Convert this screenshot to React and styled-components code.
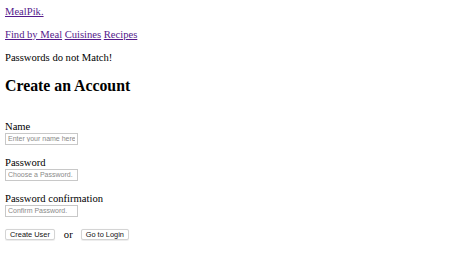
import React from 'react';
import styled, { createGlobalStyle } from 'styled-components';

const GlobalStyle = createGlobalStyle`
  body {
    margin: 5px;
    font-family: "Liberation Serif", "Times New Roman", serif;
    font-size: 10.6px;
    line-height: 1.15;
    color: #000;
    background: #fff;
  }
`;

const Header = styled.header`
  padding-top: 1px;
`;

const Link = styled.a`
  color: #551a8b;
  text-decoration: underline;
`;

const Nav = styled.p`
  margin: 10.6px 0;
  display: flex;
  gap: 2.6px;
`;

const Para = styled.p`
  margin: 10.6px 0;
`;

const Title = styled.h1`
  font-size: 15.8px;
  font-weight: bold;
  margin: 13px 0;
`;

const Form = styled.form`
  padding-top: 13px;
`;

const Field = styled.div`
  margin: 0 0 12px;
  display: flex;
  flex-direction: column;
  align-items: flex-start;
`;

const Label = styled.label`
  line-height: 12px;
`;

const Input = styled.input`
  font-family: "Liberation Sans", Arial, sans-serif;
  font-size: 7px;
  width: 67px;
  height: 8px;
  padding: 1px 2px;
  margin: 0;
  border: 1px solid #c8c8c8;
  border-radius: 0;
  color: #000;

  &::placeholder {
    color: #8a8a8a;
  }
`;

const Actions = styled.div`
  display: flex;
  align-items: center;
  margin-top: 7.5px;
`;

const Button = styled.button`
  font-family: "Liberation Sans", Arial, sans-serif;
  font-size: 7.4px;
  height: 11px;
  padding: 0 4px;
  background: #fff;
  border: 1px solid #d4d4d4;
  border-radius: 2px;
  box-shadow: 0 0.5px 1px rgba(0, 0, 0, 0.08);
  color: #111;
`;

const Or = styled.span`
  margin: 0 8px 0 9px;
`;

export default function App() {
  return (
    <>
      <GlobalStyle />
      <Header>
        <Link href="#">MealPik.</Link>
      </Header>
      <Nav>
        <Link href="#">Find by Meal</Link>
        <Link href="#">Cuisines</Link>
        <Link href="#">Recipes</Link>
      </Nav>
      <Para>Passwords do not Match!</Para>
      <Title>Create an Account</Title>
      <Form onSubmit={(e) => e.preventDefault()}>
        <Field>
          <Label>Name</Label>
          <Input placeholder="Enter your name here" />
        </Field>
        <Field>
          <Label>Password</Label>
          <Input type="password" placeholder="Choose a Password." />
        </Field>
        <Field>
          <Label>Password confirmation</Label>
          <Input type="password" placeholder="Confirm Password." />
        </Field>
        <Actions>
          <Button type="submit">Create User</Button>
          <Or>or</Or>
          <Button type="button">Go to Login</Button>
        </Actions>
      </Form>
    </>
  );
}
